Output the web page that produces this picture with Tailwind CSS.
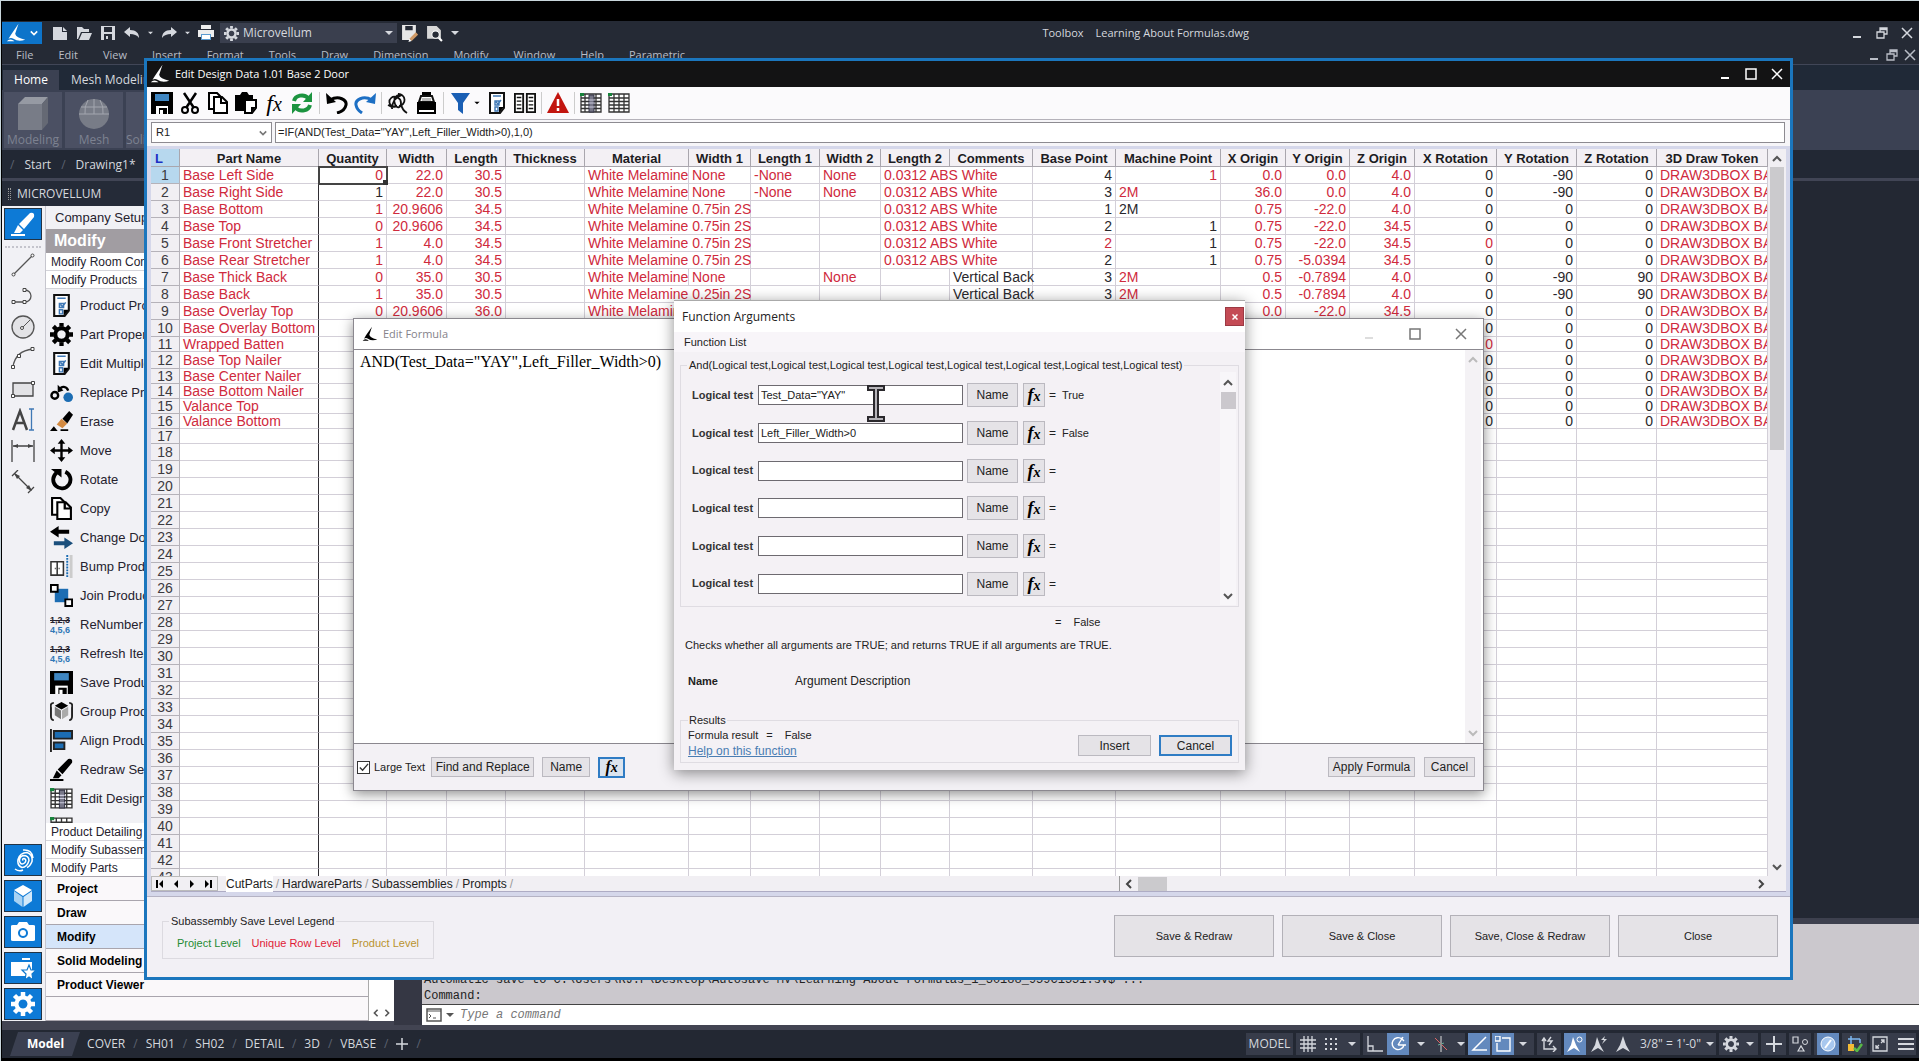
<!DOCTYPE html>
<html lang="en">
<head>
  <meta charset="UTF-8">
  <meta name="viewport" content="width=device-width, initial-scale=1.0">
  <title>Toolbox - Learning About Formulas.dwg</title>
  <script src="https://cdn.jsdelivr.net/npm/@tailwindcss/browser@4"></script>
</head>
<body class="relative h-screen overflow-hidden bg-black flex flex-col border-t border-l border-[#c9d6dc] font-['Liberation_Sans',Arial,sans-serif] text-xs text-[#222]">

  <!-- icon library -->
  <svg class="hidden">
    <symbol id="logo" viewBox="0 0 24 24"><path d="M15 1l-4 12q1 5 12 7-8 3-14-1-3-2-6 0l3-5zM1 22q3-4 8-1l1 1z" fill="currentColor"/></symbol>
    <symbol id="tri" viewBox="0 0 8 6"><path d="M0 1h8L4 5z" fill="currentColor"/></symbol>
    <symbol id="gear" viewBox="0 0 24 24"><path fill="none" stroke="currentColor" stroke-width="4" d="M12 5.500a6.500 6.500 0 1 0 .01 0z"/><path stroke="currentColor" stroke-width="4.500" d="M12 0v4M12 20v4M0 12h4M20 12h4M3.500 3.500l3 3M17.500 17.500l3 3M3.500 20.500l3-3M17.500 6.500l3-3"/></symbol>
    <symbol id="new" viewBox="0 0 16 16"><path fill="currentColor" d="M1 2h9v5h5v8H1zM11 2l4 4h-4z"/></symbol>
    <symbol id="open" viewBox="0 0 16 16"><path fill="currentColor" d="M1 14V2h5l2 2h5v3H5L2 14zM6 8h10l-3 7H3z"/></symbol>
    <symbol id="disk" viewBox="0 0 16 16"><path fill="currentColor" fill-rule="evenodd" d="M1 1h14v14H1zM4 2h8v5H4zM4 9v6h8V9zM6 11h2v3H6z"/></symbol>
    <symbol id="undo" viewBox="0 0 16 16"><path fill="currentColor" d="M0 7l6-5v3c6 0 9 3 9 8-2-3-5-4-9-4v3z"/></symbol>
    <symbol id="redo" viewBox="0 0 16 16"><path fill="currentColor" d="M16 7l-6-5v3c-6 0-9 3-9 8 2-3 5-4 9-4v3z"/></symbol>
    <symbol id="print" viewBox="0 0 16 16"><path fill="#eee" d="M3 0h10v4H3zM0 5h16v7H0z"/><path fill="#5b9bd0" d="M3 9h10v6H3z"/><path fill="#fff" d="M4 10h8v4H4z"/></symbol>
    <symbol id="diskpen" viewBox="0 0 16 16"><path fill="#e6e6e6" fill-rule="evenodd" d="M1 0h13v8l-6 6H1zM4 1h7v4H4z"/><path stroke="#d09a66" stroke-width="3" d="M15 8l-6 6"/><path fill="#fff" d="M7 16l1-3 2 2z"/></symbol>
    <symbol id="preview" viewBox="0 0 16 16"><path fill="#d8d8d8" d="M1 1h9l4 4v8H1z"/><circle cx="9" cy="9" r="3.500" fill="#272c36" stroke="#fff"/><path stroke="#fff" stroke-width="2" d="M12 12l3 3"/></symbol>
    <symbol id="min" viewBox="0 0 12 12"><path stroke="currentColor" stroke-width="2" d="M2 10h8"/></symbol>
    <symbol id="max" viewBox="0 0 12 12"><path fill="none" stroke="currentColor" stroke-width="1.500" d="M1 1h10v10H1z"/></symbol>
    <symbol id="restore" viewBox="0 0 12 12"><path fill="none" stroke="currentColor" stroke-width="1.300" d="M1 5h7v6H1zM4 5V1h7v6H8M4 2.500h7"/></symbol>
    <symbol id="x" viewBox="0 0 12 12"><path stroke="currentColor" stroke-width="1.500" d="M1 1l10 10M11 1L1 11"/></symbol>
    <symbol id="up" viewBox="0 0 10 10"><path fill="none" stroke="currentColor" stroke-width="2" d="M1 7l4-4 4 4"/></symbol>
    <symbol id="down" viewBox="0 0 10 10"><path fill="none" stroke="currentColor" stroke-width="2" d="M1 3l4 4 4-4"/></symbol>
    <symbol id="left" viewBox="0 0 10 10"><path fill="none" stroke="currentColor" stroke-width="2" d="M7 1L3 5l4 4"/></symbol>
    <symbol id="right" viewBox="0 0 10 10"><path fill="none" stroke="currentColor" stroke-width="2" d="M3 1l4 4-4 4"/></symbol>

    <symbol id="save" viewBox="0 0 22 22"><path d="M0 0h22v22H0z"/><path fill="#3f86c2" d="M4 2h14v7H4z"/><path fill="#fff" d="M5 14h12v8H5z"/><path d="M8 16h8v6H8z"/><path fill="#fff" d="M9 18h3v4H9z"/></symbol>
    <symbol id="cut" viewBox="0 0 22 22"><path fill="none" stroke="#000" stroke-width="2.500" d="M5 1l10 15M17 1L7 16"/><circle cx="6" cy="18" r="3" fill="none" stroke="#000" stroke-width="2"/><circle cx="16" cy="18" r="3" fill="none" stroke="#000" stroke-width="2"/></symbol>
    <symbol id="copy" viewBox="0 0 22 22"><path fill="#fff" stroke="#000" stroke-width="2" d="M2 1h8l4 4v12H2z"/><path fill="#fff" stroke="#000" stroke-width="2" d="M7 5h8l5 5v11H7zM14 5v6h6"/></symbol>
    <symbol id="paste" viewBox="0 0 22 22"><path d="M0 3h5l2-3h5l2 3h4v4H9v12H0z"/><path fill="#fff" stroke="#000" stroke-width="2" d="M10 8h11v8l-4 5h-7z"/><path d="M16 15h5l-5 6z"/></symbol>
    <symbol id="refresh" viewBox="0 0 22 22"><path fill="none" stroke="#1c9440" stroke-width="4" d="M3 9a8 7 0 0 1 14-3M19 13a8 7 0 0 1-14 3"/><path fill="#1c9440" d="M21 0v10h-9zM1 22V12h9z"/></symbol>
    <symbol id="undo2" viewBox="0 0 22 22"><path fill="none" stroke="currentColor" stroke-width="3" d="M4 8c9-5 17 0 16 5s-5 7-9 8"/><path fill="currentColor" d="M0 1l1 11 9-2z"/></symbol>
    <symbol id="redo2" viewBox="0 0 22 22"><path fill="none" stroke="currentColor" stroke-width="3" d="M18 8C9 3 1 8 2 13s3 6 6 8"/><path fill="currentColor" d="M22 1l-1 11-9-2z"/></symbol>
    <symbol id="find" viewBox="0 0 22 22"><path fill="none" stroke="#111" stroke-width="1.800" d="M9 5a5 5 0 1 0 1 9M11 2a6 6 0 1 1 1 12M5 17c0-7 4-12 10-14M13 3c-4 0-7 4-5 9s6 4 6-1-5-7-7-4M14 12q1 6 6 9M1 13l4 2 5-1"/></symbol>
    <symbol id="stamp" viewBox="0 0 22 22"><path d="M7 0h9v3H7z"/><path fill="#fff" stroke="#111" stroke-width="2" d="M6 4h11l2 6H4z"/><path fill="#bbb" d="M7 6h9v3H7z"/><path d="M2 10h19v12H2z"/><path fill="#fff" d="M4 18h15v2H4z"/></symbol>
    <symbol id="funnel" viewBox="0 0 22 22"><path fill="#1a5fb4" d="M1 1h19l-7 10v11l-5-4v-7z"/></symbol>
    <symbol id="props" viewBox="0 0 22 22"><path fill="#fff" stroke="#111" stroke-width="2" d="M4 1h14v15l-4 5H4z"/><path d="M13 15h5l-5 6z"/><path fill="none" stroke="#3f78b5" stroke-width="1.400" d="M7 4h8M9 9h4v4H9zM10 10l2 2 3-4M9 15h3v4H9z"/></symbol>
    <symbol id="pages" viewBox="0 0 24 22"><path fill="#fff" stroke="#111" stroke-width="2" d="M1 1h9v20H1zM14 1h9v20h-9z"/><path stroke="#111" stroke-width="1.500" d="M3 5h5M3 9h5M3 13h5M3 17h5M16 5h5M16 9h5M16 13h5M16 17h5"/></symbol>
    <symbol id="warn" viewBox="0 0 22 22"><path fill="#c2150f" d="M11 0l11 21H0z"/><path stroke="#fff" stroke-width="2.500" d="M11 7v7M11 16v3"/></symbol>
    <symbol id="sheet" viewBox="0 0 22 22"><path fill="#fff" stroke="#333" stroke-width="1.300" d="M1 2h20v18H1zM1 6h20M1 9.500h20M1 13h20M1 16.500h20M6 2v18M11 2v18M16 2v18"/><path fill="#16833b" d="M0 1h4v3H0z"/></symbol>
    <symbol id="sheet2" viewBox="0 0 22 22"><path fill="#fff" stroke="#333" stroke-width="1.300" d="M1 2h20v18H1zM1 6h20M1 9.500h20M1 13h20M1 16.500h20M5 2v18M16 2v18"/><path fill="#778" stroke="#334" d="M9 3h5v17H9z"/><path stroke="#ccd" d="M9 8h5M9 11h5M9 15h5"/><path fill="#16833b" d="M0 1h4v3H0z"/></symbol>

    <symbol id="swap" viewBox="0 0 24 24"><circle cx="5" cy="15" r="3.500" fill="none" stroke="#000" stroke-width="2.500"/><circle cx="19" cy="17" r="5" fill="#1c6db3"/><path fill="none" stroke="#000" stroke-width="2.500" d="M10 9c2-4 7-4 9 1"/><path d="M8 4v8l6-2z"/></symbol>
    <symbol id="erase" viewBox="0 0 24 24"><path d="M13 9l7-8 4 4-6 9z"/><path fill="#d38a41" d="M12 9l6 5-5 5-6-4z"/><path d="M0 22l4-5 4 5zM11 20h8v2h-8z"/></symbol>
    <symbol id="move" viewBox="0 0 24 24"><path stroke="#000" stroke-width="2.500" d="M12 2v20M2 12h20"/><path d="M12 0l4 5H8zM12 24l4-5H8zM0 12l5-4v8zM24 12l-5-4v8z"/></symbol>
    <symbol id="rotate" viewBox="0 0 24 24"><path fill="none" stroke="#000" stroke-width="4" d="M16 4a9 9 0 1 1-9 1"/><path d="M1 1h11v9z"/></symbol>
    <symbol id="change" viewBox="0 0 24 24"><path d="M9 0v4h11v4H9v4L0 6z"/><path fill="#1b4f7c" d="M15 12v4H4v4h11v4l9-6z"/></symbol>
    <symbol id="bump" viewBox="0 0 24 24"><path fill="#fff" stroke="#333" stroke-width="1.600" d="M1 7h13v14H1zM7.500 7v14M5 14h1M9 14h1"/><path stroke="#1c6db3" stroke-width="2" stroke-dasharray="2 1" d="M18 0v24"/><path stroke="#ccc" stroke-width="3" d="M22 0v24"/></symbol>
    <symbol id="join" viewBox="0 0 24 24"><path fill="#1c6db3" d="M5 5h14v14H5z"/><path fill="#fff" stroke="#000" stroke-width="2" d="M1 1h7v7H1zM16 16h7v7h-7z"/></symbol>
    <symbol id="group" viewBox="0 0 24 24"><path fill="#000" d="M12 2l7 4-7 4-7-4z"/><path fill="#777" d="M5 7l6.500 4v9L5 16z"/><path fill="#aaa" d="M19 7l-6.500 4v9l6.500-4z"/><path fill="none" stroke="#222" stroke-width="2" d="M4 3Q0 3 1 8v9q0 4 3 4M20 3q4 0 3 5v9q0 4-3 4"/></symbol>
    <symbol id="align" viewBox="0 0 24 24"><path stroke="#222" stroke-width="2" d="M1 0v24"/><path fill="#1c6db3" stroke="#222" stroke-width="2" d="M4 2h19v8H4zM4 14h11v7H4z"/></symbol>
    <symbol id="marker" viewBox="0 0 24 24"><path fill="currentColor" d="M8 12L19 1q5-1 4 4L13 17zM7 13l5 5-3 3H3zM0 22h14v2H0z"/></symbol>

    <symbol id="line" viewBox="0 0 24 24"><path stroke="#555" stroke-width="1.300" d="M3 21L21 3"/><circle cx="2.500" cy="21.500" r="1.500" fill="#fff" stroke="#444"/><circle cx="21.500" cy="2.500" r="1.500" fill="#fff" stroke="#444"/></symbol>
    <symbol id="poly" viewBox="0 0 24 24"><path fill="none" stroke="#555" stroke-width="1.300" d="M2 18h12a6 6 0 1 0 0-12"/><path fill="#fff" stroke="#444" d="M1 16.500h3v3H1zM12 16.500h3v3h-3zM12 4.500h3v3h-3z"/></symbol>
    <symbol id="circle" viewBox="0 0 24 24"><circle cx="12" cy="12" r="11" fill="#e3e3e6" stroke="#555" stroke-width="1.300"/><path stroke="#555" d="M12 12l7-7"/><circle cx="11" cy="13" r="1.500" fill="#fff" stroke="#444"/></symbol>
    <symbol id="arc" viewBox="0 0 24 24"><path fill="none" stroke="#555" stroke-width="1.300" d="M2 21Q4 5 22 3"/><path fill="#fff" stroke="#444" d="M.5 19.500h3v3h-3zM6.500 8.500h3v3h-3zM20 1.500h3v3h-3z"/></symbol>
    <symbol id="rect" viewBox="0 0 24 24"><path fill="#e3e3e6" stroke="#444" stroke-width="1.300" d="M2 6h20v13H2z"/><path fill="#fff" stroke="#444" d="M.5 17.500h3v3h-3zM20.500 4.500h3v3h-3z"/></symbol>
    <symbol id="mtext" viewBox="0 0 24 24"><path fill="none" stroke="#444" stroke-width="2.500" d="M2 22L9 3l7 19M5 15h9"/><path fill="none" stroke="#3f78b5" stroke-width="1.300" d="M18 1h5M20.500 1v21M18 22h5"/></symbol>
    <symbol id="dim" viewBox="0 0 24 24"><path fill="none" stroke="#444" stroke-width="1.300" d="M1 1v22M23 1v22M2 7h20"/><path fill="#444" d="M2 7l5-2v4zM22 7l-5-2v4z"/></symbol>
    <symbol id="adim" viewBox="0 0 24 24"><path stroke="#444" stroke-width="1.300" d="M1 6l6-6M17 23l6-6M4 4l16 16"/><path fill="#444" d="M3 3l6 3-3 3zM21 21l-6-3 3-3z"/></symbol>
    <symbol id="spiral" viewBox="0 0 24 24"><path fill="none" stroke="#fff" stroke-width="1.500" d="M12 12.500q-1-2 1-2 3 1 1 4-3 3-5 0-2-5 3-7 6 0 6 5-2 7-7 7-5-2-4-8 2-7 9-7 6 2 5 9-2 5-5 6M12 2q9-1 10 8M4 21q4 3 8 1"/></symbol>
    <symbol id="cube" viewBox="0 0 24 24"><path fill="#fff" d="M12 1l9 5-9 6-9-6z"/><path fill="#a8d2f3" d="M3 7l8.500 6v10L3 17z"/><path fill="#d3e9fa" d="M21 7l-8.500 6v10l8.500-6z"/></symbol>
    <symbol id="camera" viewBox="0 0 24 24"><path fill="#fff" fill-rule="evenodd" d="M0 6q0-1 2-1h4l2-3h8l2 3h4q2 0 2 1v14q0 1-2 1H2q-2 0-2-1zM12 8a5 5 0 1 0 .01 0z"/><circle cx="12" cy="13" r="3" fill="#fff"/></symbol>
    <symbol id="folder" viewBox="0 0 24 24"><path fill="#fff" d="M11 2h8v2h-8zM0 6h21v14H0z"/><path fill="#fff" stroke="#0e78cd" stroke-width="1.200" d="M18 9l2 5h5l-4 4 1 6-4-3-4 3 1-6-4-4h5z"/></symbol>

    <symbol id="grid" viewBox="0 0 16 16"><path stroke="currentColor" stroke-width="1.300" d="M4 0v16M8 0v16M12 0v16M0 4h16M0 8h16M0 12h16"/></symbol>
    <symbol id="dots" viewBox="0 0 16 16"><path stroke="currentColor" stroke-width="2" stroke-dasharray="2 3" d="M1 3h14M1 8h14M1 13h14"/></symbol>
    <symbol id="ortho" viewBox="0 0 16 16"><path fill="none" stroke="currentColor" stroke-width="1.300" d="M1 0v15h15M1 10h5v5"/></symbol>
    <symbol id="polar" viewBox="0 0 16 16"><path fill="none" stroke="currentColor" stroke-width="1.400" d="M12 3a6 6 0 1 0 2 6M8 9h8M8 9l5-8M11 2l3 3"/></symbol>
    <symbol id="iso" viewBox="0 0 16 16"><path stroke="#ddd" d="M8 0v16"/><path stroke="#d66" d="M2 2l12 12"/><path stroke="#6a9" d="M5 9l6-2"/></symbol>
    <symbol id="angle" viewBox="0 0 16 16"><path fill="none" stroke="currentColor" stroke-width="1.500" d="M15 1L2 14h14"/></symbol>
    <symbol id="snap" viewBox="0 0 16 16"><path fill="none" stroke="currentColor" stroke-width="1.400" d="M0 0h5v5H0zM7 2h8v13H2V7"/></symbol>
    <symbol id="ucs" viewBox="0 0 16 16"><path fill="none" stroke="currentColor" stroke-width="1.400" d="M3 3v10h12M1 5l2-3 2 3M12 10l3 3-3 3M10 1L7 5h4l-3 4"/></symbol>
    <symbol id="anno" viewBox="0 0 16 16"><path fill="currentColor" d="M8 0l3 9 4 7-7-4-7 4 4-7z"/></symbol>
    <symbol id="annoc" viewBox="0 0 16 16"><path fill="currentColor" d="M6 1l3 8 4 7-6-4-7 4 4-7z"/><circle cx="12.500" cy="3.500" r="2.500" fill="none" stroke="currentColor"/></symbol>
    <symbol id="annof" viewBox="0 0 16 16"><path fill="currentColor" d="M6 1l3 8 4 7-6-4-7 4 4-7zM14 0l-4 4h3l-2 4 5-5h-3z"/></symbol>
    <symbol id="plus" viewBox="0 0 16 16"><path stroke="currentColor" stroke-width="2" d="M8 0v16M0 8h16"/></symbol>
    <symbol id="shapes" viewBox="0 0 16 16"><path fill="none" stroke="currentColor" stroke-width="1.200" d="M1 1h5v6H1zM6 15l3-5 3 5z"/><circle cx="13" cy="6" r="2.500" fill="none" stroke="currentColor"/></symbol>
    <symbol id="disc" viewBox="0 0 16 16"><circle cx="8" cy="8" r="7" fill="#a9c8ee" stroke="#fff"/><path stroke="#fff" stroke-width="2" d="M5 12l6-8"/></symbol>
    <symbol id="trust" viewBox="0 0 16 16"><path stroke="#7db7f0" stroke-width="1.500" fill="none" d="M1 3h12M4 0v8M13 3v4"/><path fill="#f3bb35" d="M1 8h6v7H1z"/><path fill="none" stroke="#58b947" stroke-width="2.500" d="M7 12l3 3 5-7"/></symbol>
    <symbol id="full" viewBox="0 0 16 16"><path fill="none" stroke="currentColor" stroke-width="1.300" d="M1 1h14v14H1zM9 4h3v3M12 4L9 7M4 9v3h3M4 12l3-3"/></symbol>
    <symbol id="menu" viewBox="0 0 16 16"><path stroke="currentColor" stroke-width="2" d="M0 3h16M0 8h16M0 13h16"/></symbol>
    <symbol id="prompt" viewBox="0 0 16 16"><path fill="#fff" stroke="#555" stroke-width="1.500" d="M1 2h14v12H1z"/><path fill="none" stroke="#555" d="M1 4h14M3 7l2 2-2 2M7 11h3"/></symbol>
  </svg>

  <div class="h-5 shrink-0"></div>

  <!-- application title bar -->
  <header class="flex flex-col shrink-0 ml-px bg-[#252a35] text-[#d5d8de] font-['Open_Sans',sans-serif]">
    <div class="flex items-center h-6">
      <button aria-label="Application menu" class="flex items-center justify-center gap-1 w-10 h-[22px] bg-[#0d74ca] text-white"><svg class="size-5"><use href="#logo"/></svg><svg class="size-2"><use href="#down"/></svg></button>
      <div class="flex items-center gap-2 ml-[10px]">
        <button aria-label="New"><svg class="size-4"><use href="#new"/></svg></button>
        <button aria-label="Open"><svg class="size-4"><use href="#open"/></svg></button>
        <button aria-label="Save"><svg class="size-4"><use href="#disk"/></svg></button>
        <button aria-label="Undo"><svg class="size-4"><use href="#undo"/></svg></button>
        <svg class="w-[5px] h-1"><use href="#tri"/></svg>
        <button aria-label="Redo"><svg class="size-4"><use href="#redo"/></svg></button>
        <svg class="w-[5px] h-1"><use href="#tri"/></svg>
        <button aria-label="Print"><svg class="size-4"><use href="#print"/></svg></button>
      </div>
      <label class="flex items-center w-[177px] h-5 ml-[6px] px-1 bg-[#3a3f4e]">
        <svg class="size-[15px]"><use href="#gear"/></svg>
        <select aria-label="Workspace" class="flex-1 appearance-none ml-1 text-xs"><option>Microvellum</option></select>
        <svg class="w-2 h-[6px]"><use href="#tri"/></svg>
      </label>
      <div class="flex items-center gap-2 ml-1">
        <button aria-label="Save workspace"><svg class="size-[17px]"><use href="#diskpen"/></svg></button>
        <button aria-label="Preview"><svg class="size-[17px]"><use href="#preview"/></svg></button>
        <svg class="w-2 h-[6px]"><use href="#tri"/></svg>
      </div>
      <div class="ml-auto flex gap-3 text-[11px]"><span>Toolbox</span><span>Learning About Formulas.dwg</span></div>
      <div class="flex gap-[13px] ml-[602px] mr-[6px]">
        <button aria-label="Minimize"><svg class="size-3"><use href="#min"/></svg></button>
        <button aria-label="Restore"><svg class="size-3"><use href="#restore"/></svg></button>
        <button aria-label="Close"><svg class="size-3"><use href="#x"/></svg></button>
      </div>
    </div>
    <nav class="flex items-center gap-[25px] h-5 pt-px pl-[14px] border-b border-[#414657] text-[11px] text-[#b9bdc6]">
      <a href="#">File</a><a href="#">Edit</a><a href="#">View</a><a href="#">Insert</a><a href="#">Format</a><a href="#">Tools</a><a href="#">Draw</a><a href="#">Dimension</a><a href="#">Modify</a><a href="#">Window</a><a href="#">Help</a><a href="#">Parametric</a>
      <div class="ml-auto flex gap-[6px] mr-[3px]">
        <button aria-label="Minimize drawing"><svg class="size-3"><use href="#min"/></svg></button>
        <button aria-label="Restore drawing"><svg class="size-3"><use href="#restore"/></svg></button>
        <button aria-label="Close drawing"><svg class="size-3"><use href="#x"/></svg></button>
      </div>
    </nav>
    <div class="flex items-end h-[25px] pl-px bg-[#202937]">
      <a href="#" class="flex items-center justify-center w-14 h-5 bg-[#3b4152] text-white">Home</a>
      <a href="#" class="flex items-center h-5 ml-3">Mesh Modeling</a>
    </div>
    <div class="flex gap-[3px] h-[60px] p-[2px] bg-[#3b4153] text-[#7d8291]">
      <div class="flex flex-col items-center justify-between w-[58px] bg-[#4b5063]">
        <svg class="size-9 mt-1" viewBox="0 0 36 36"><path fill="#787c87" d="M3 8h24v26H3z"/><path fill="#969aa3" d="M3 8l7-7h23l-6 7z"/><path fill="#656974" d="M27 8l6-7v26l-6 7z"/></svg><span>Modeling</span></div>
      <div class="flex flex-col items-center justify-between w-[58px] bg-[#4b5063]">
        <svg class="size-9 mt-1" viewBox="0 0 36 36"><circle cx="18" cy="18" r="15" fill="#787c87"/><path fill="none" stroke="#a3a6af" d="M5 11h26M3 18h30M18 3v15M12 4Q8 11 9 18M24 4q4 7 3 14"/></svg><span>Mesh</span></div>
      <div class="flex flex-col items-start justify-end w-[58px] bg-[#4b5063]"><span>Solid</span></div>
    </div>
    <div class="flex items-center gap-[10px] h-7 pt-[2px] pl-2 bg-[#222834]">
      <span class="text-[#5c6270]">/</span><a href="#">Start</a><span class="text-[#5c6270]">/</span><a href="#">Drawing1*</a>
    </div>
    <div class="h-[3px] bg-[#414555]"></div>
  </header>

  <main class="flex flex-1 min-h-0 ml-px bg-[#232833]">
    <!-- Microvellum palette -->
    <section class="flex flex-col w-[392px] shrink-0 bg-[#f1f1f5] border-b-4 border-[#424452]">
      <h2 class="flex items-center gap-[6px] h-[25px] pl-[6px] shrink-0 bg-[#252b38] text-[#d5d8de] font-['Open_Sans',sans-serif]"><span class="w-[3px] h-3 border-x border-dotted border-[#999]"></span>MICROVELLUM</h2>
      <div class="flex flex-1 min-h-0">
        <div id="strip" class="flex flex-col w-[43px] shrink-0 pt-[2px] pl-[2px] pr-[3px]">
          <button aria-label="Toolbox" class="flex items-center justify-center h-8 shrink-0 bg-[#0d7ad6] border border-[#234] text-white"><svg class="size-6"><use href="#marker"/></svg></button>
          <div class="mt-[6px] mx-px border-t-2 border-dotted border-[#c4c4cc]"></div>
          <div class="flex flex-col items-center gap-[7px] mt-[5px]">
            <svg class="size-6"><use href="#line"/></svg>
            <svg class="size-6"><use href="#poly"/></svg>
            <svg class="size-6"><use href="#circle"/></svg>
            <svg class="size-6"><use href="#arc"/></svg>
            <svg class="size-6"><use href="#rect"/></svg>
            <svg class="size-6"><use href="#mtext"/></svg>
            <svg class="size-6"><use href="#dim"/></svg>
            <svg class="size-6"><use href="#adim"/></svg>
          </div>
          <div class="flex flex-col gap-1 mt-auto mb-px">
            <button aria-label="Library" class="flex items-center justify-center h-8 bg-[#0d7ad6] border border-[#234]"><svg class="size-6"><use href="#spiral"/></svg></button>
            <button aria-label="Products" class="flex items-center justify-center h-8 bg-[#0d7ad6] border border-[#234]"><svg class="size-6"><use href="#cube"/></svg></button>
            <button aria-label="Render" class="flex items-center justify-center h-8 bg-[#0d7ad6] border border-[#234]"><svg class="size-6"><use href="#camera"/></svg></button>
            <button aria-label="Favorites" class="flex items-center justify-center h-8 bg-[#0d7ad6] border border-[#234]"><svg class="size-6"><use href="#folder"/></svg></button>
            <button aria-label="Options" class="flex items-center justify-center h-8 bg-[#0d7ad6] border border-[#234] text-white"><svg class="size-6"><use href="#gear"/></svg></button>
          </div>
        </div>
        <div class="flex flex-col flex-1 min-w-0 border-l border-[#c6c6ce] text-[#25222e]">
          <div class="flex items-center h-[23px] shrink-0 pl-[9px] text-[13px]">Company Setup</div>
          <div class="flex items-center h-6 shrink-0 pl-2 bg-[#a19da2] text-white text-base font-bold">Modify</div>
          <div class="flex items-center h-[18px] shrink-0 pl-[5px] bg-white border-b border-[#d4d4da]">Modify Room Components</div>
          <div class="flex items-center h-[18px] shrink-0 pl-[5px] bg-white border-b border-[#d4d4da]">Modify Products</div>
          <ul id="tools" class="flex flex-col flex-1 min-h-0 overflow-hidden pt-[2px] pl-1 text-[13px]"></ul>
          <div class="flex items-center h-[18px] shrink-0 pl-[5px] bg-white border-b border-[#d4d4da]">Product Detailing</div>
          <div class="flex items-center h-[18px] shrink-0 pl-[5px] bg-white border-b border-[#d4d4da]">Modify Subassemblies</div>
          <div class="flex items-center h-[18px] shrink-0 pl-[5px] bg-white border-b border-[#a9a5ad]">Modify Parts</div>
          <div class="flex h-36 shrink-0">
            <div class="flex flex-col flex-1 font-bold text-black border-r border-[#aaa]">
              <a href="#" class="flex items-center h-6 pl-[11px] bg-[#faf8fa] border-b border-[#a9a5ad]">Project</a>
              <a href="#" class="flex items-center h-6 pl-[11px] bg-[#faf8fa] border-b border-[#a9a5ad]">Draw</a>
              <a href="#" class="flex items-center h-6 pl-[11px] bg-[#d5e5fa] border-b border-[#a9a5ad]">Modify</a>
              <a href="#" class="flex items-center h-6 pl-[11px] bg-[#faf8fa] border-b border-[#a9a5ad]">Solid Modeling</a>
              <a href="#" class="flex items-center h-6 pl-[11px] bg-[#faf8fa] border-b border-[#a9a5ad]">Product Viewer</a>
              <div class="h-6 bg-[#faf8fa] border-b border-[#a9a5ad]"></div>
            </div>
            <div class="flex items-end justify-between w-[25px] px-[3px] pb-1 bg-white text-[#555]"><svg class="size-2"><use href="#left"/></svg><svg class="size-2"><use href="#right"/></svg></div>
          </div>
        </div>
      </div>
    </section>
    <!-- drawing area and command line -->
    <section class="flex flex-col flex-1 justify-end">
      <div class="h-[6px] bg-[#3d404e]"></div>
      <div class="flex">
        <div class="w-7 bg-[#353744]"></div>
        <div class="flex-1 font-['Liberation_Mono',monospace] leading-4">
          <div class="flex flex-col justify-end h-[81px] pl-[2px] bg-[#cbc8cd] text-[#222] border-b border-[#444] whitespace-pre"><span>Automatic save to C:\Users\RJ.P\Desktop\Autosave MV\Learning About Formulas_1_30188_959C1551.sv$ ...</span><span>Command:</span></div>
          <div class="flex items-center h-5 pl-1 bg-white text-[#555]"><svg class="size-4"><use href="#prompt"/></svg><svg class="w-2 h-[6px] ml-1"><use href="#tri"/></svg><input aria-label="Command" placeholder="Type a command" class="flex-1 ml-[6px] italic outline-none placeholder:text-[#777]"></div>
        </div>
      </div>
    </section>
  </main>

  <!-- status bar -->
  <div class="h-[5px] shrink-0 ml-px bg-[#424452]"></div>
  <footer class="flex items-center h-[28px] shrink-0 ml-px mb-[3px] bg-[#232833] text-[#d5d8de] font-['Open_Sans',sans-serif]">
    <nav class="flex items-center">
      <svg class="w-3 h-6 ml-2 text-[#3b4051]" viewBox="0 0 12 24"><path fill="currentColor" d="M0 24L8 0h4v24z"/></svg>
      <a href="#" class="flex items-center h-6 pl-[5px] bg-[#3b4051] text-white font-bold">Model</a>
      <svg class="w-4 h-6 text-[#3b4051]" viewBox="0 0 16 24"><path fill="currentColor" d="M0 0h16L8 24H0z"/></svg>
      <div class="flex items-center gap-2 pl-[7px] [&>i]:text-[#5c6270] [&>i]:not-italic">
        <a href="#">COVER</a><i>/</i><a href="#">SH01</a><i>/</i><a href="#">SH02</a><i>/</i><a href="#">DETAIL</a><i>/</i><a href="#">3D</a><i>/</i><a href="#">VBASE</a><i>/</i><button aria-label="New layout"><svg class="size-3"><use href="#plus"/></svg></button><i>/</i>
      </div>
    </nav>
    <div class="flex items-center gap-[3px] h-6 ml-auto mr-[3px] [&>div]:bg-[#373c4a] [&>div]:h-[22px] [&>div]:flex [&>div]:items-center">
      <div class="w-[47px] justify-center">MODEL</div>
      <div class="w-16 justify-between px-1"><svg class="size-4"><use href="#grid"/></svg><svg class="size-4"><use href="#dots"/></svg><svg class="w-2 h-[6px]"><use href="#tri"/></svg></div>
      <div class="gap-2 pl-1 w-[102px]"><svg class="size-4"><use href="#ortho"/></svg><span class="-ml-1 p-[3px] bg-[#6389bd] text-white"><svg class="size-4"><use href="#polar"/></svg></span><svg class="w-2 h-[6px]"><use href="#tri"/></svg><svg class="size-4"><use href="#iso"/></svg><svg class="w-2 h-[6px]"><use href="#tri"/></svg></div>
      <div class="gap-[2px] w-[66px]"><span class="p-[3px] bg-[#6389bd] text-white"><svg class="size-4"><use href="#angle"/></svg></span><span class="p-[3px] bg-[#6389bd] text-white"><svg class="size-4"><use href="#snap"/></svg></span><svg class="w-2 h-[6px] ml-[3px]"><use href="#tri"/></svg></div>
      <div class="w-6 justify-center"><svg class="size-4"><use href="#ucs"/></svg></div>
      <div class="gap-[5px] w-[152px]"><span class="p-[3px] bg-[#6389bd] text-white"><svg class="size-4"><use href="#annoc"/></svg></span><svg class="size-4"><use href="#annof"/></svg><svg class="size-4 ml-[3px]"><use href="#anno"/></svg><span class="ml-1 whitespace-nowrap">3/8" = 1'-0"</span><svg class="w-2 h-[6px] shrink-0"><use href="#tri"/></svg></div>
      <div class="justify-between w-[39px] pl-1 pr-1"><svg class="size-4"><use href="#gear"/></svg><svg class="w-2 h-[6px]"><use href="#tri"/></svg></div>
      <div class="w-[25px] justify-center"><svg class="size-4"><use href="#plus"/></svg></div>
      <div class="w-[22px] justify-center"><svg class="size-4"><use href="#shapes"/></svg></div>
      <div class="w-[25px] justify-end"><span class="p-[3px] bg-[#6389bd]"><svg class="size-4"><use href="#disc"/></svg></span></div>
      <div class="w-[25px] justify-center"><svg class="size-4"><use href="#trust"/></svg></div>
      <div class="w-[46px] justify-between px-[2px]"><svg class="size-4"><use href="#full"/></svg><svg class="size-4"><use href="#menu"/></svg></div>
    </div>
  </footer>

  <!-- Edit Design Data window -->
  <div class="absolute left-[143px] right-[126px] top-[57px] bottom-[81px] flex flex-col border-[3px] border-[#1b76bd] bg-[#f2f0f5]">
    <div class="flex items-center h-[26px] shrink-0 pl-[3px] pr-[7px] bg-[#131314] text-white">
      <svg class="size-5"><use href="#logo"/></svg>
      <span class="ml-[5px] text-[11px] font-['Open_Sans',sans-serif]">Edit Design Data 1.01 Base 2 Door</span>
      <div class="ml-auto flex gap-[14px]">
        <button aria-label="Minimize window"><svg class="size-3"><use href="#min"/></svg></button>
        <button aria-label="Maximize window"><svg class="size-3"><use href="#max"/></svg></button>
        <button aria-label="Close window"><svg class="size-3"><use href="#x"/></svg></button>
      </div>
    </div>
    <div class="flex items-center gap-[6px] h-[33px] shrink-0 pl-1 bg-[#fbfafc] border-b border-[#b5b2ba]">
      <button aria-label="Save data"><svg class="size-[22px]"><use href="#save"/></svg></button>
      <button aria-label="Cut"><svg class="size-[22px]"><use href="#cut"/></svg></button>
      <button aria-label="Copy"><svg class="size-[22px]"><use href="#copy"/></svg></button>
      <button aria-label="Paste"><svg class="size-[22px]"><use href="#paste"/></svg></button>
      <button class="w-[22px] font-['Liberation_Serif',serif] italic text-black leading-none"><span class="text-2xl leading-none">f</span><span class="text-xl leading-none">x</span></button>
      <button aria-label="Refresh"><svg class="size-[22px]"><use href="#refresh"/></svg></button>
      <div class="w-px h-[22px] bg-[#ccc]"></div>
      <button aria-label="Undo edit" class="text-black"><svg class="size-[22px]"><use href="#undo2"/></svg></button>
      <button aria-label="Redo edit" class="text-[#1d6fc4]"><svg class="size-[22px]"><use href="#redo2"/></svg></button>
      <div class="w-px h-[22px] -mx-px bg-[#ccc]"></div>
      <button aria-label="Find"><svg class="size-[22px]"><use href="#find"/></svg></button>
      <button aria-label="Stamp"><svg class="size-[22px]"><use href="#stamp"/></svg></button>
      <div class="w-px h-[22px] bg-[#ccc]"></div>
      <button aria-label="Filter" class="flex items-center gap-[2px]"><svg class="size-[22px]"><use href="#funnel"/></svg><svg class="w-[6px] h-1 text-black"><use href="#tri"/></svg></button>
      <button aria-label="Properties"><svg class="size-[22px]"><use href="#props"/></svg></button>
      <button aria-label="Compare"><svg class="size-[22px]"><use href="#pages"/></svg></button>
      <div class="w-px h-[22px] -mx-px bg-[#ccc]"></div>
      <button aria-label="Errors"><svg class="size-[22px]"><use href="#warn"/></svg></button>
      <div class="w-px h-[22px] -mx-px bg-[#ccc]"></div>
      <button aria-label="Column view"><svg class="size-[22px]"><use href="#sheet2"/></svg></button>
      <button aria-label="Sheet view"><svg class="size-[22px]"><use href="#sheet"/></svg></button>
    </div>
    <div class="flex gap-[3px] h-[26px] shrink-0 pt-[2px] pb-[3px] pl-1 pr-[5px] bg-[#f6f5f8] text-[11px]">
      <label class="flex items-center w-[121px] px-1 bg-white border border-[#8d8b91]">
        <select aria-label="Cell" class="flex-1 appearance-none"><option>R1</option></select><svg class="size-2 text-[#777]"><use href="#down"/></svg>
      </label>
      <input aria-label="Formula" value='=IF(AND(Test_Data="YAY",Left_Filler_Width>0),1,0)' class="flex-1 px-[2px] bg-white border border-[#8d8b91] outline-none">
    </div>

    <div class="flex flex-col flex-1 min-h-0 pt-[3px] px-1 bg-[#d5d7ea]">
      <div class="flex flex-1 min-h-0 bg-white">
        <div class="flex-1 min-w-0 overflow-hidden">
          <table id="grid-data" class="w-full table-fixed border-separate border-spacing-0 text-sm leading-4 text-[#cf2a3d]">
            <colgroup>
              <col class="w-[29px]"><col class="w-[139px]"><col class="w-[68px]"><col class="w-[60px]"><col class="w-[59px]"><col class="w-[79px]"><col class="w-[104px]"><col class="w-[62px]"><col class="w-[69px]"><col class="w-[61px]"><col class="w-[69px]"><col class="w-[83px]"><col class="w-[83px]"><col class="w-[105px]"><col class="w-[65px]"><col class="w-[64px]"><col class="w-[65px]"><col class="w-[82px]"><col class="w-[80px]"><col class="w-[80px]"><col>
            </colgroup>
            <thead class="text-[13px] leading-[14px] text-[#1c1c1f]"><tr id="head"></tr></thead>
            <tbody id="rows"></tbody>
          </table>
        </div>
        <div class="flex flex-col items-center w-[18px] shrink-0 pt-[5px] pb-1 bg-[#f1eff3] text-[#555]">
          <svg class="size-[10px] shrink-0"><use href="#up"/></svg>
          <div class="w-[14px] h-[283px] mt-[3px] bg-[#cbcacd]"></div>
          <svg class="size-[10px] mt-auto"><use href="#down"/></svg>
        </div>
      </div>
      <div class="flex items-center h-4 shrink-0 bg-[#f1eff3] border-b border-[#aeacc4]">
        <div class="flex items-center h-full gap-2 w-[67px] pl-1 border border-[#bbb] text-[10px] text-black leading-none">
          <button aria-label="First sheet"><svg class="size-[8px]" viewBox="0 0 8 8"><path d="M0 0h2v8H0zM7 0v8L3 4z"/></svg></button>
          <button aria-label="Previous sheet"><svg class="size-[8px]" viewBox="0 0 8 8"><path d="M6 0v8L2 4z"/></svg></button>
          <button aria-label="Next sheet"><svg class="size-[8px]" viewBox="0 0 8 8"><path d="M2 0v8l4-4z"/></svg></button>
          <button aria-label="Last sheet"><svg class="size-[8px]" viewBox="0 0 8 8"><path d="M6 0h2v8H6zM1 0v8l4-4z"/></svg></button>
        </div>
        <nav class="flex items-center gap-[3px] w-[902px] h-full pl-2 border-r border-[#999] [&>i]:text-[#999] [&>i]:not-italic">
          <a href="#" class="bg-white">CutParts</a><i>/</i><a href="#">HardwareParts</a><i>/</i><a href="#">Subassemblies</a><i>/</i><a href="#">Prompts</a><i>/</i>
        </nav>
        <svg class="size-[10px] ml-1 text-[#444]"><use href="#left"/></svg>
        <div class="w-[29px] h-[14px] ml-1 bg-[#cbcacd]"></div>
        <svg class="size-[10px] ml-auto mr-5 text-[#444]"><use href="#right"/></svg>
      </div>
    </div>
    <div class="h-[5px] shrink-0 bg-[#d5d7ea] border-b border-[#b5b3c4]"></div>
    <div class="flex items-start justify-between h-20 shrink-0 pl-[15px] pr-3 pt-[18px] text-[11px]">
      <fieldset class="w-[272px] h-11 px-[14px] border border-[#dcdae0]">
        <legend class="-ml-2 px-[2px] leading-3">Subassembly Save Level Legend</legend>
        <div class="flex justify-between mt-[9px]"><span class="text-[#1f8c33]">Project Level</span><span class="text-[#e01b35]">Unique Row Level</span><span class="text-[#b9932f]">Product Level</span></div>
      </fieldset>
      <div class="flex gap-2">
        <button class="w-40 h-[42px] bg-[#e5e3e7] border border-[#b3b1b8]">Save &amp; Redraw</button>
        <button class="w-40 h-[42px] bg-[#e5e3e7] border border-[#b3b1b8]">Save &amp; Close</button>
        <button class="w-40 h-[42px] bg-[#e5e3e7] border border-[#b3b1b8]">Save, Close &amp; Redraw</button>
        <button class="w-40 h-[42px] bg-[#e5e3e7] border border-[#b3b1b8]">Close</button>
      </div>
    </div>
  </div>

  <!-- Edit Formula window -->
  <div class="absolute left-[352px] top-[317px] w-[1131px] h-[473px] flex flex-col bg-[#f3f1f5] border border-[#8b888f] shadow-[0_3px_12px_rgba(0,0,0,0.45)]">
    <div class="flex items-center h-[31px] shrink-0 pl-2 pr-4 bg-white text-[#85828a] border-b border-[#8b888f]">
      <svg class="size-4 text-black"><use href="#logo"/></svg><span class="ml-[5px] text-[11px] font-['Open_Sans',sans-serif]">Edit Formula</span>
      <div class="ml-auto flex gap-[34px] text-[#777]">
        <button aria-label="Minimize formula" class="text-[#ddd]"><svg class="size-3"><use href="#min"/></svg></button>
        <button aria-label="Maximize formula"><svg class="size-3"><use href="#max"/></svg></button>
        <button aria-label="Close formula"><svg class="size-3"><use href="#x"/></svg></button>
      </div>
    </div>
    <div class="flex flex-1 bg-white border-b border-[#8b888f]">
      <textarea aria-label="Formula text" class="flex-1 resize-none outline-none pl-[6px] pt-[2px] text-base leading-5 text-black font-['Liberation_Serif',serif]">AND(Test_Data="YAY",Left_Filler_Width>0)</textarea>
      <div class="flex flex-col justify-between w-4 py-[5px] mr-[2px] items-center bg-[#f4f2f5] text-[#bbb]"><svg class="size-[10px]"><use href="#up"/></svg><svg class="size-[10px]"><use href="#down"/></svg></div>
    </div>
    <div class="flex items-center h-[46px] shrink-0 pl-[3px] pr-2">
      <input id="large" type="checkbox" checked class="peer appearance-none size-[13px] border border-[#333] bg-white">
      <svg class="size-[11px] -ml-3 mr-px pointer-events-none" viewBox="0 0 12 12"><path fill="none" stroke="#333" stroke-width="1.500" d="M2 6l3 3 6-7"/></svg>
      <label for="large" class="ml-1 text-[11px]">Large Text</label>
      <button class="w-[103px] h-5 ml-[6px] bg-[#e5e3e7] border border-[#bbb9c0]">Find and Replace</button>
      <button class="w-12 h-5 ml-2 bg-[#e5e3e7] border border-[#bbb9c0]">Name</button>
      <button class="w-[27px] h-[21px] ml-2 bg-[#dbe4ee] border-2 border-[#2f7cc4] font-['Liberation_Serif',serif] italic font-bold text-black leading-none"><span class="text-base leading-none">f</span><span class="text-sm leading-none">x</span></button>
      <button class="w-[87px] h-5 ml-auto bg-[#e5e3e7] border border-[#bbb9c0]">Apply Formula</button>
      <button class="w-[51px] h-5 ml-[9px] bg-[#e5e3e7] border border-[#bbb9c0]">Cancel</button>
    </div>
  </div>

  <!-- Function Arguments window -->
  <div class="absolute left-[673px] top-[299px] w-[571px] h-[470px] flex flex-col bg-[#f4f1f5] border-t border-[#aaa] text-[11px] shadow-[0_3px_14px_rgba(0,0,0,0.45)]">
    <div class="flex items-center h-[31px] shrink-0 pl-2 pr-px bg-white">
      <span class="text-xs font-['Open_Sans',sans-serif]">Function Arguments</span>
      <button aria-label="Close arguments" class="ml-auto w-[19px] h-[19px] bg-[#c44b55] border border-[#9c3a44] flex items-center justify-center text-white"><svg class="size-[6px]" viewBox="0 0 12 12"><path stroke="currentColor" stroke-width="3" d="M1 1l10 10M11 1L1 11"/></svg></button>
    </div>
    <div class="flex items-center h-5 shrink-0 pl-[10px] bg-[#f8f5f9]">Function List</div>
    <fieldset class="h-[249px] shrink-0 mx-[6px] mt-[6px] border border-[#dfdce2]">
      <legend class="ml-[6px] px-[2px] leading-[14px]">And(Logical test,Logical test,Logical test,Logical test,Logical test,Logical test,Logical test,Logical test)</legend>
      <div class="flex">
        <div id="args" class="flex-1 pt-1"></div>
        <div class="flex flex-col items-center w-4 h-[233px] mr-[2px] pt-[6px] pb-1 bg-[#f8f6f9] text-[#555]"><svg class="size-[10px]"><use href="#up"/></svg><div class="w-[15px] h-[17px] mt-1 bg-[#cbc8cd]"></div><svg class="size-[10px] mt-auto"><use href="#down"/></svg></div>
      </div>
    </fieldset>
    <div class="flex gap-3 mt-[7px] pl-[381px] leading-4"><span>=</span><span>False</span></div>
    <p class="mt-[7px] pl-[11px] leading-4">Checks whether all arguments are TRUE; and returns TRUE if all arguments are TRUE.</p>
    <div class="flex mt-5 pl-[14px] leading-4"><b class="w-[107px]">Name</b><span class="text-xs leading-4">Argument Description</span></div>
    <fieldset class="flex h-[50px] mt-auto mb-[7px] mx-[6px] pl-[7px] pr-[6px] border border-[#dfdce2] text-xs leading-4">
      <legend class="px-px leading-[14px] text-[11px]">Results</legend>
      <div>
        <div class="flex gap-2 text-[11px] leading-4"><span>Formula result</span><span>=</span><span class="ml-1">False</span></div>
        <a href="#" class="underline text-[#4a7db3]">Help on this function</a>
      </div>
      <div class="flex gap-2 ml-auto mt-2"><button class="w-[73px] h-[21px] bg-[#e5e3e7] border border-[#bbb9c0]">Insert</button><button class="w-[73px] h-[21px] bg-[#e5e3e7] border-2 border-[#2f7cc4]">Cancel</button></div>
    </fieldset>
  </div>

  <!-- text cursor -->
  <svg class="absolute left-[865px] top-[383px] w-[20px] h-[39px]" viewBox="0 0 20 39"><path fill="none" stroke="#2a282c" stroke-width="6" d="M1 4h18M1 35h18M10 4v31"/><path fill="none" stroke="#b5b3b8" stroke-width="2" d="M3 4h14M3 35h14M10 4v31"/></svg>

  <script>
    // left-hand tool list: icon, caption
    const tools = [
      ["props", "Product Prop"], ["gear", "Part Properti"], ["props", "Edit Multiple"], ["swap", "Replace Prod"],
      ["erase", "Erase"], ["move", "Move"], ["rotate", "Rotate"], ["copy", "Copy"], ["change", "Change Door"],
      ["bump", "Bump Product"], ["join", "Join Products"], ["", "ReNumber"], ["", "Refresh Item"], ["save", "Save Product"],
      ["group", "Group Product"], ["align", "Align Product"], ["marker", "Redraw Sele"], ["sheet2", "Edit Design D"], ["sheet", ""]
    ];
    document.getElementById("tools").innerHTML = tools.map(([icon, text]) => {
      const pic = icon
        ? `<svg class="size-[23px] text-black"><use href="#${icon}"/></svg>`
        : `<span class="w-[23px] text-[9px] leading-[10px] font-bold"><s class="block">1,2,3</s><span class="text-[#2f78b7]">4,5,6</span></span>`;
      return `<li class="flex items-center gap-[7px] h-[29px] shrink-0 whitespace-nowrap">${pic}${text}</li>`;
    }).join("");

    const heads = ["L", "Part Name", "Quantity", "Width", "Length", "Thickness", "Material", "Width 1", "Length 1", "Width 2", "Length 2", "Comments", "Base Point", "Machine Point", "X Origin", "Y Origin", "Z Origin", "X Rotation", "Y Rotation", "Z Rotation", "3D Draw Token"];
    document.getElementById("head").innerHTML = heads.map((h, i) => {
      const tone = i === 0 ? "bg-[#b7d8ee] text-[#1a2fc4] text-left pl-1" : "bg-[#f3f0f4] pl-0";
      return `<th class="h-[18px] pt-[3px] pb-0 pr-0 whitespace-nowrap border-r border-b border-[#a9a6ad] ${tone}">${h}</th>`;
    }).join("");

    // "~" marks a black value, "<" a value that runs over the next column
    const W = "White Melamine", D = "DRAW3DBOX BA", A = "<0.0312 ABS White";
    const data = [
      ["Base Left Side", "0", "22.0", "30.5", "", W, "None", "-None", "None", A, "", "~4", "1", "0.0", "0.0", "4.0", "~0", "~-90", "~0", D],
      ["Base Right Side", "~1", "22.0", "30.5", "", W, "None", "-None", "None", A, "", "~3", "2M", "36.0", "0.0", "4.0", "~0", "~-90", "~0", D],
      ["Base Bottom", "1", "20.9606", "34.5", "", "<" + W + " 0.75in 2S", "", "", "", A, "", "~1", "~2M", "0.75", "-22.0", "4.0", "~0", "~0", "~0", D],
      ["Base Top", "0", "20.9606", "34.5", "", "<" + W + " 0.75in 2S", "", "", "", A, "", "~2", "~1", "0.75", "-22.0", "34.5", "~0", "~0", "~0", D],
      ["Base Front Stretcher", "1", "4.0", "34.5", "", "<" + W + " 0.75in 2S", "", "", "", A, "", "2", "~1", "0.75", "-22.0", "34.5", "0", "~0", "~0", D],
      ["Base Rear Stretcher", "1", "4.0", "34.5", "", "<" + W + " 0.75in 2S", "", "", "", A, "", "~2", "~1", "0.75", "-5.0394", "34.5", "~0", "~0", "~0", D],
      ["Base Thick Back", "0", "35.0", "30.5", "", W, "None", "", "None", "", "~Vertical Back", "~3", "2M", "0.5", "-0.7894", "4.0", "~0", "~-90", "~90", D],
      ["Base Back", "1", "35.0", "30.5", "", "<" + W + " 0.25in 2S", "", "", "", "", "~Vertical Back", "~3", "2M", "0.5", "-0.7894", "4.0", "~0", "~-90", "~90", D],
      ["Base Overlay Top", "0", "20.9606", "36.0", "", W, "", "", "", "", "", "", "", "0.0", "-22.0", "34.5", "~0", "~0", "~0", D]
    ];
    ["Base Overlay Bottom", "Wrapped Batten", "Base Top Nailer", "Base Center Nailer", "Base Bottom Nailer", "Valance Top", "Valance Bottom"].forEach(name => {
      const x = name === "Wrapped Batten" ? "0" : "~0";
      data.push([name, "", "", "", "", "", "", "", "", "", "", "", "", "", "", "", x, "~0", "~0", D]);
    });

    const shortRows = [11, 13, 14, 15, 16, 17];
    const leftCols = [0, 5, 6, 7, 8, 9, 10, 19];
    let html = "";
    for (let n = 1; n <= 43; n++) {
      const h = shortRows.includes(n) ? "h-[15px] leading-[14px]" : "h-[17px] leading-4";
      const cells = data[n - 1] || Array(20).fill("");
      html += `<tr><th class="p-0 font-normal text-[#3c3a40] border-r border-b border-[#b5b2b9] ${h} ${n === 1 ? "bg-[#b7d8ee]" : "bg-[#f1eff3]"}">${n}</th>`;
      cells.forEach((v, i) => {
        const over = v.startsWith("<"), black = v.startsWith("~");
        const text = v.replace(/^[<~]/, "");
        const align = leftCols.includes(i) || text === "2M" ? "text-left pl-[3px] pr-0" : "text-right pr-[3px] pl-0";
        const edge = i === 0 ? "border-r border-r-[#2f2d33]" : over ? "" : "border-r border-r-[#d3cfd8]";
        const clip = i === 19 ? "overflow-hidden" : "";
        const sel = n === 1 && i === 1 ? "relative outline-2 -outline-offset-1 outline-[#444]" : "";
        const dot = sel ? `<span class="absolute -right-[2px] -bottom-[2px] size-[5px] bg-[#333]"></span>` : "";
        html += `<td class="py-0 whitespace-nowrap border-b border-b-[#d3cfd8] ${h} ${align} ${edge} ${clip} ${sel} ${black ? "text-[#29272c]" : ""}">${text}${dot}</td>`;
      });
      html += "</tr>";
    }
    document.getElementById("rows").innerHTML = html;

    const args = [['Test_Data="YAY"', "True"], ["Left_Filler_Width>0", "False"], ["", ""], ["", ""], ["", ""], ["", ""]];
    document.getElementById("args").innerHTML = args.map(([value, result], i) => `
      <div class="flex items-center h-[38px] nth-[3n]:h-[37px] pl-[11px]">
        <label for="arg${i}" class="w-[66px] font-bold text-[#333]">Logical test</label>
        <input id="arg${i}" value="${value.replace(/"/g, "&quot;")}" class="w-[205px] h-5 px-[2px] bg-white border border-[#6d6a70] outline-none">
        <button class="w-[51px] h-6 ml-1 bg-[#e5e3e7] border border-[#bbb9c0] text-xs">Name</button>
        <button class="w-[22px] h-6 ml-[5px] bg-[#e5e3e7] border border-[#bbb9c0] font-['Liberation_Serif',serif] italic font-bold text-black leading-none"><span class="text-lg leading-none">f</span><span class="text-sm leading-none">x</span></button>
        <span class="ml-1 text-xs">=</span><span class="ml-[6px]">${result}</span>
      </div>`).join("");
  </script>
</body>
</html>
